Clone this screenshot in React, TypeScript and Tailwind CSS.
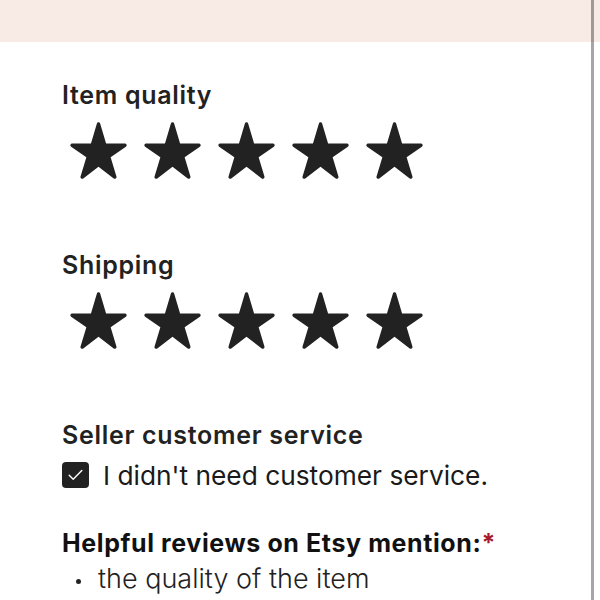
import React from "react";

const font = { fontFamily: "Inter, 'Noto Sans', sans-serif" };

function Star() {
    return (
        <svg width="57" height="57" viewBox="3.9 3.9 16.2 16.2" className="fill-[#222222]">
            <path d="M19.985 10.36a.5.5 0 0 0-.477-.352h-5.351L12.488 4.366a.5.5 0 0 0-.962 0L9.857 10.008H4.5a.5.5 0 0 0-.279.914l4.329 2.967L6.9 19.4a.5.5 0 0 0 .773.546L12 16.618l4.322 3.323a.5.5 0 0 0 .778-.541l-1.649-5.51 4.329-2.967a.5.5 0 0 0 .205-.563Z" />
        </svg>
    );
}

function Rating({ label }: { label: string }) {
    return (
        <div className="flex flex-col">
            <div className="text-[25px] leading-[32px] tracking-[0.7px] font-semibold text-[#222222]">{label}</div>
            <div className="flex gap-[17px] ml-[8px] mt-[11px]">
                <Star />
                <Star />
                <Star />
                <Star />
                <Star />
            </div>
        </div>
    );
}

export default function App() {
    return (
        <div className="relative h-[600px] w-[600px] overflow-hidden bg-white" style={font}>
            {/* top banner */}
            <div className="h-[42px] bg-[#f8ebe6]" />

            <div className="flex flex-col pl-[62px] pt-[37px]">
                <Rating label="Item quality" />
                <div className="mt-[70px]">
                    <Rating label="Shipping" />
                </div>

                {/* customer service */}
                <div className="mt-[70px] flex flex-col">
                    <div className="text-[25px] leading-[32px] tracking-[0.7px] font-semibold text-[#222222]">
                        Seller customer service
                    </div>
                    <div className="flex gap-[14px] mt-[7px]">
                        <div className="mt-[4px] flex h-[26px] w-[27px] items-center justify-center rounded-[4px] bg-[#222222]">
                            <svg width="15" height="12" viewBox="0 0 15 12" fill="none">
                                <path d="M1.2 6.2l4 4 8.6-8.8" stroke="white" strokeWidth="1.4" strokeLinecap="round" strokeLinejoin="round" />
                            </svg>
                        </div>
                        <span className="text-[26.3px] leading-[36px] text-[#1a1a1a]">
                            I didn't need customer service.
                        </span>
                    </div>
                </div>

                {/* review hints */}
                <div className="mt-[33px] flex flex-col">
                    <div className="text-[25px] leading-[32px] tracking-[0.6px] font-bold text-[#111111]">
                        Helpful reviews on Etsy mention:<span className="text-[#a61a2e]">*</span>
                    </div>
                    <div className="mt-[2px] flex items-center h-[36px]">
                        <span className="ml-[14px] mr-[17px] mt-[4px] h-[5px] w-[5px] rounded-full bg-[#222222]" />
                        <span className="text-[27px] leading-[36px] font-light text-[#222222]">the quality of the item</span>
                    </div>
                </div>
            </div>

            {/* scrollbar */}
            <div className="absolute top-0 bottom-0 left-[591px] w-[3px] bg-black/35" />
        </div>
    );
}
